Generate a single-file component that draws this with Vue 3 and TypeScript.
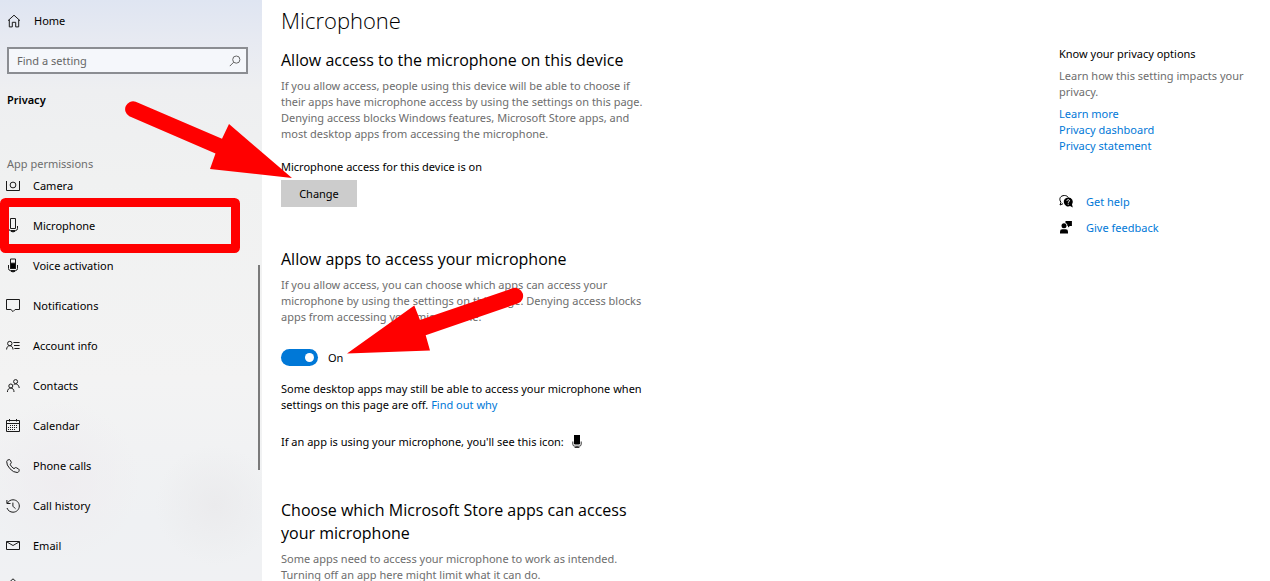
<script setup lang="ts">
import { ref } from 'vue'

interface NavItem {
  id: string
  label: string
}

const items: NavItem[] = [
  { id: 'camera', label: 'Camera' },
  { id: 'microphone', label: 'Microphone' },
  { id: 'voice', label: 'Voice activation' },
  { id: 'notifications', label: 'Notifications' },
  { id: 'account', label: 'Account info' },
  { id: 'contacts', label: 'Contacts' },
  { id: 'calendar', label: 'Calendar' },
  { id: 'phone', label: 'Phone calls' },
  { id: 'history', label: 'Call history' },
  { id: 'email', label: 'Email' },
]

const query = ref('')
const appsAllowed = ref(true)
</script>

<template>
  <div class="window">
    <aside class="sidebar">
      <a class="home" href="#">
        <svg class="icon" viewBox="0 0 14 14" aria-hidden="true">
          <path d="M1 6.7 7 1.2l6 5.5M2.3 5.8v7.1h3V8.3h3.4v4.6h3V5.8" />
        </svg>
        <span>Home</span>
      </a>
      <label class="search">
        <input v-model="query" type="text" placeholder="Find a setting" aria-label="Find a setting" />
        <svg class="lens" viewBox="0 0 12 12" aria-hidden="true">
          <circle cx="7.3" cy="4.6" r="3.6" />
          <path d="M4.7 7.2 .8 11.1" />
        </svg>
      </label>
      <h2 class="category">Privacy</h2>
      <h3 class="group">App permissions</h3>
      <div class="nav-area">
        <nav class="nav">
          <a v-for="item in items" :key="item.id" class="nav-item" href="#">
            <svg class="icon" viewBox="0 0 14 14" aria-hidden="true">
              <template v-if="item.id === 'camera'">
                <path d="M.5 1.5h2.7l.8-1.4h6l.8 1.4h2.700v10H.5z" />
                <circle cx="7" cy="6" r="2.900" />
              </template>
              <template v-else-if="item.id === 'microphone'">
                <path d="M4.500-.5h5v10h-5zM2.500 7v2.500q0 2 2 2h5q2 0 2-2V7M7 11.500v2M4.800 12.500h4.400" />
              </template>
              <template v-else-if="item.id === 'voice'">
                <path d="M4.500 0h5v9.500h-5z" />
                <path class="solid" d="M4.500 4.200h5v5.300h-5z" />
                <path d="M2.500 6v3.500q0 2 2 2h5q2 0 2-2V6M7 11.500v2M4.800 12.500h4.400" />
              </template>
              <path v-else-if="item.id === 'notifications'" d="M.5.5h13v10H9.100L7 12.600l-2.100-2.100H.5z" />
              <template v-else-if="item.id === 'account'">
                <circle cx="3.800" cy="4.500" r="2.200" />
                <path d="M.6 10.500c0-2.400 1.400-3.800 3.200-3.800S7 8.100 7 10.500M7.400 3.500h6.200M8 6.500h5.600M8.400 9.500h5.200" />
              </template>
              <template v-else-if="item.id === 'contacts'">
                <circle cx="4.800" cy="7" r="2" />
                <circle cx="9.600" cy="2.600" r="2" />
                <path d="M1.400 13c0-2.400 1.500-4 3.400-4s3.200 1.600 3.200 4M7.700 5.600c2.800-1.600 5.200.2 5.500 3.400" />
              </template>
              <template v-else-if="item.id === 'calendar'">
                <path d="M.5 1.500h13v11H.5zM.5 4.500h13M3.500 0v2.500M10.500 0v2.500" />
                <path class="dots" d="M4.500 6v5.500M6.500 6v5.500M8.500 6v5.500M10.500 6v3.500M2.500 8v3.500" />
              </template>
              <path
                v-else-if="item.id === 'phone'"
                d="M1.700 1.100 3.100.6q.7-.2 1.100.5l1.100 2.200q.3.700-.3 1.200l-1 .8q1.300 2.700 4 4.400l1.100-.9q.6-.5 1.200-.1l2.400 1.400q.7.500.5 1.200l-.4 1.200q-.4 1-1.600 1Q7.400 13.600 3.900 9.700T.7 2.500q.1-1 1-1.400z"
              />
              <template v-else-if="item.id === 'history'">
                <path d="M1.400 4.200C2.500 2 4.600.8 7 .8c3.500 0 6.300 2.700 6.300 6.200S10.500 13.200 7 13.200c-2.800 0-5.200-1.700-6-4.200M.9 1v3.500h3.600" />
                <path d="M6.900 3.600v3.600l2.400 2.400" />
              </template>
              <template v-else>
                <path d="M.5 2.500h13v8H.5z" />
                <path d="M.8 2.900 7 6.500l6.200-3.600" />
              </template>
            </svg>
            <span>{{ item.label }}</span>
          </a>
          <a class="nav-item" href="#" aria-label="Tasks">
            <svg class="icon" viewBox="0 0 14 14" aria-hidden="true">
              <path d="M2 4.500 7-.2l5 4.700v7H2z" />
            </svg>
          </a>
        </nav>
        <div class="scrollbar"></div>
      </div>
    </aside>

    <main class="content">
      <h1>Microphone</h1>

      <section class="first">
        <h2>Allow access to the microphone on this device</h2>
        <p class="muted">
          If you allow access, people using this device will be able to choose if<br />
          their apps have microphone access by using the settings on this page.<br />
          Denying access blocks Windows features, Microsoft Store apps, and<br />
          most desktop apps from accessing the microphone.
        </p>
        <p class="status">Microphone access for this device is on</p>
        <button class="change" type="button">Change</button>
      </section>

      <section class="second">
        <h2>Allow apps to access your microphone</h2>
        <p class="muted">
          If you allow access, you can choose which apps can access your<br />
          microphone by using the settings on this page. Denying access blocks<br />
          apps from accessing your microphone.
        </p>
        <label class="toggle">
          <input v-model="appsAllowed" type="checkbox" role="switch" />
          <span>{{ appsAllowed ? 'On' : 'Off' }}</span>
        </label>
        <p>
          Some desktop apps may still be able to access your microphone when<br />
          settings on this page are off. <a href="#">Find out why</a>
        </p>
        <p class="hint">
          <span>If an app is using your microphone, you'll see this icon:</span>
          <svg class="mic" viewBox="0 0 10 14" aria-hidden="true">
            <path class="head" d="M2.500 0h5v9h-5z" />
            <path d="M.8 6.500v2.700q0 2 2 2h4.400q2 0 2-2V6.500M5 11v2M2.600 12.500h4.800" />
          </svg>
        </p>
      </section>

      <section class="third">
        <h2>Choose which Microsoft Store apps can access<br />your microphone</h2>
        <p class="muted">
          Some apps need to access your microphone to work as intended.<br />
          Turning off an app here might limit what it can do.
        </p>
      </section>
    </main>

    <aside class="related">
      <h2>Know your privacy options</h2>
      <p class="muted">Learn how this setting impacts your<br />privacy.</p>
      <ul class="links">
        <li><a href="#">Learn more</a></li>
        <li><a href="#">Privacy dashboard</a></li>
        <li><a href="#">Privacy statement</a></li>
      </ul>
      <ul class="support">
        <li>
          <svg viewBox="0 0 14 14" aria-hidden="true">
            <path class="line" d="M4 8.700 1 10l.9-2.700C-.6 3.500 1.700.6 5.300.5c2 0 3.300.8 4 2" />
            <path d="M9.200 2.400a4.500 4.500 0 1 0 1.900 8.600l2.700 1.600-.8-3.100a4.500 4.500 0 0 0-3.800-7.100z" />
            <path class="mark" d="M7.900 5.700c.1-1.500 2.700-1.400 2.600.1-.1.900-1.300.9-1.300 2M9.200 8.700v1" />
          </svg>
          <a href="#">Get help</a>
        </li>
        <li>
          <svg viewBox="0 0 14 14" aria-hidden="true">
            <path d="M6.500 0h6.400v5h-2L9 6.500V5H8.500A3 3 0 0 0 6.500 2z" />
            <circle cx="5" cy="4.800" r="2.500" />
            <path d="M1 12.600V10.500q0-2.300 2.300-2.300h3.400q2.300 0 2.300 2.300v2.100z" />
          </svg>
          <a href="#">Give feedback</a>
        </li>
      </ul>
    </aside>

    <svg class="markup" width="530" height="370" aria-hidden="true">
      <rect x="4.500" y="202.500" width="231" height="46" rx="1" />
      <path class="arrow" d="M135.700 101.700 222 138.700 229 124 292 178 210 169 215.500 153.500 129.300 116.300A8 8 0 0 1 135.700 101.700z" />
      <path class="arrow" d="M512.500 288.300 420 320 414.300 305.500 347 353.500 430 350.500 425.700 335.300 517.700 303.500A8 8 0 0 0 512.500 288.300z" />
    </svg>
  </div>
</template>

<style>
body {
  margin: 0;
}
</style>

<style scoped>
.window {
  position: relative;
  display: grid;
  grid-template-columns: 262px 1fr 211px;
  height: 100vh;
  overflow: hidden;
  background: #fff;
  color: #000;
  font: 11px/16px "Noto Sans", "Open Sans", sans-serif;
}
h1,
h2,
h3,
p,
ul {
  margin: 0;
  padding: 0;
  font-weight: 400;
}
ul {
  list-style: none;
}
a {
  color: #0078d7;
  text-decoration: none;
}
.muted {
  color: #6d6d6d;
}
.sidebar {
  display: flex;
  flex-direction: column;
  min-height: 0;
  overflow: hidden;
  background:
    radial-gradient(circle at 215px 505px, #ebebed 0, transparent 60px),
    radial-gradient(circle at 60px 480px, #efedf0 0, transparent 80px),
    linear-gradient(#dfe5f2 0, #e7eaf2 40px, #eeeff1 90px, #f0f1f1 180px, #f3f3f3 380px, #eff1f3 520px, #f0f1f3 100%);
}
.icon {
  flex: none;
  width: 14px;
  height: 14px;
  overflow: visible;
  fill: none;
  stroke: #1a1a1a;
  stroke-width: 1;
}
.icon .solid {
  fill: #000;
}
.icon .dots {
  stroke-dasharray: 1 1;
}
.home,
.nav-item {
  display: flex;
  align-items: center;
  gap: 13px;
  height: 40px;
  padding-left: 6px;
  color: #000;
}
.home {
  flex: none;
  margin-top: 1px;
  padding-left: 7px;
}
.search {
  display: flex;
  align-items: center;
  flex: none;
  box-sizing: border-box;
  height: 27px;
  margin: 6px 14px 0 7px;
  padding: 0 5px 0 8px;
  border: 2px solid #8b8d92;
  background: #f5f7fb;
}
.search input {
  flex: 1;
  min-width: 0;
  padding: 0;
  border: 0;
  outline: 0;
  background: transparent;
  font: inherit;
}
.search input::placeholder {
  color: #666;
  opacity: 1;
}
.lens {
  width: 12px;
  height: 12px;
  fill: none;
  stroke: #666;
}
.category {
  margin: 18px 0 0 7px;
  font-size: 11px;
  font-weight: 600;
}
.group {
  margin: 48px 0 0 7px;
  font-size: 11px;
  color: #6d6d6d;
}
.nav-area {
  position: relative;
  flex: 1;
  min-height: 0;
  margin-top: 9px;
  overflow: hidden;
}
.nav {
  margin-top: -15px;
}
.scrollbar {
  position: absolute;
  top: 21%;
  right: 2px;
  width: 2px;
  height: 51%;
  background: #7a7a7a;
}
.content {
  padding: 4px 0 0 19px;
  white-space: nowrap;
}
h1,
.content h2 {
  font-family: "Open Sans", "Noto Sans", sans-serif;
}
h1 {
  font-size: 22px;
  line-height: 32px;
  font-weight: 300;
}
.content h2 {
  font-size: 16px;
  line-height: 23px;
}
section .muted {
  margin-top: 6px;
}
.first {
  margin-top: 13px;
}
.status {
  margin-top: 17px;
}
.change {
  display: block;
  width: 76px;
  height: 27px;
  margin-top: 5px;
  padding: 0;
  border: 0;
  background: #ccc;
  color: #000;
  font: inherit;
}
.second {
  margin-top: 41px;
}
.toggle {
  display: flex;
  align-items: center;
  gap: 10px;
  width: max-content;
  margin: 24px 0 15px;
}
.toggle input {
  appearance: none;
  display: flex;
  align-items: center;
  box-sizing: border-box;
  width: 37px;
  height: 17px;
  margin: 0;
  padding: 0 4px;
  border-radius: 9px;
  background: #0078d7;
}
.toggle input::before {
  content: "";
  width: 9px;
  height: 9px;
  border-radius: 50%;
  background: #fff;
}
.toggle input:checked::before {
  margin-left: auto;
}
.hint {
  display: flex;
  align-items: center;
  gap: 8px;
  margin-top: 21px;
}
.mic {
  width: 10px;
  height: 14px;
  fill: none;
  stroke: #333;
}
.mic .head {
  fill: #000;
  stroke: #000;
}
.third {
  margin-top: 49px;
}
.related {
  padding-top: 46px;
  white-space: nowrap;
}
.related h2 {
  font-size: 11px;
}
.related .muted,
.links {
  margin-top: 6px;
}
.support {
  display: grid;
  gap: 10px;
  margin-top: 40px;
}
.support li {
  display: flex;
  align-items: center;
  gap: 13px;
}
.support svg {
  width: 14px;
  height: 14px;
  overflow: visible;
}
.support .line {
  fill: none;
  stroke: #000;
}
.support .mark {
  fill: none;
  stroke: #fff;
}
.markup {
  position: absolute;
  top: 0;
  left: 0;
  pointer-events: none;
}
.markup rect {
  fill: none;
  stroke: #f00;
  stroke-width: 9;
  stroke-linejoin: round;
}
.arrow {
  fill: #f00;
}
</style>
